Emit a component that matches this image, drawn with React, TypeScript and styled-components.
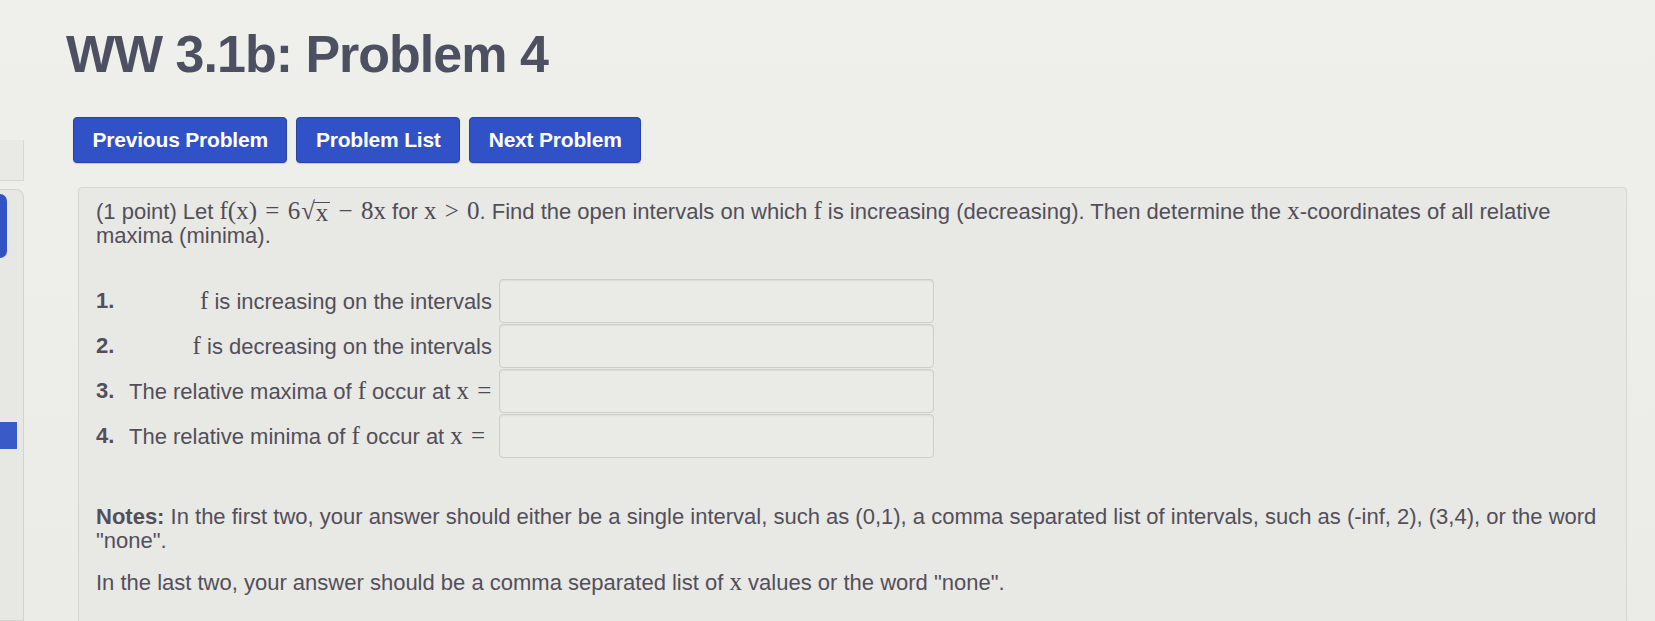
import React from "react";
import styled, { createGlobalStyle } from "styled-components";

const Global = createGlobalStyle`
  html, body { margin: 0; padding: 0; background: #ecebe8; }
  body { font-family: "Liberation Sans", Arial, Helvetica, sans-serif; overflow: hidden; }
  #root { height: 621px; }
`;

const Page = styled.div`
  display: flex;
  height: 621px;
  overflow: hidden;
  background: linear-gradient(180deg, #efefec 0%, #ebebe7 100%);
`;

const Rail = styled.aside`
  width: 24px;
  flex: none;
  display: flex;
  flex-direction: column;
`;

const RailTop = styled.div`
  margin-top: 140px;
  height: 40px;
  background: #e9e9e6;
  border-right: 1px solid #d8d7d2;
  border-bottom: 1px solid #d8d7d2;
`;

const RailPanel = styled.div`
  margin-top: 8px;
  flex: 1;
  display: flex;
  flex-direction: column;
  background: #e7e7e3;
  border: 1px solid #d4d3ce;
  border-left: none;
  border-top-right-radius: 8px;
`;

const RailPill = styled.div`
  margin-top: 4px;
  width: 7px;
  height: 64px;
  background: #3352c4;
  border-radius: 0 7px 7px 0;
`;

const RailSquare = styled.div`
  margin-top: 164px;
  width: 17px;
  height: 27px;
  background: #3a5ac8;
`;

const Main = styled.main`
  flex: 1;
  min-width: 0;
  display: flex;
  flex-direction: column;
  padding: 0 28px 0 49px;
`;

const Title = styled.h1`
  margin: 26px 0 0 -7px;
  font-size: 52px;
  line-height: 57px;
  font-weight: bold;
  letter-spacing: -1px;
  color: #4d5060;
`;

const ButtonRow = styled.nav`
  display: flex;
  gap: 9px;
  margin-top: 34px;
`;

const NavButton = styled.button`
  height: 46px;
  padding: 0 18.5px;
  font-family: "Liberation Sans", Arial, sans-serif;
  font-size: 21px;
  font-weight: bold;
  color: #ffffff;
  background: #3151c7;
  border: 1px solid #2842a6;
  border-radius: 4px;
  box-shadow: 0 1px 1px rgba(0, 0, 0, 0.15);
  letter-spacing: -0.2px;
`;

const ProblemBox = styled.section`
  flex: 1;
  margin-top: 24px;
  margin-left: 5px;
  padding: 11px 17px 40px 17px;
  background: #e8e8e4;
  border: 1px solid #d7d6d1;
  border-radius: 4px;
  font-size: 22px;
  line-height: 24px;
  color: #524f5a;
`;

const Para = styled.p<{ $mt?: number }>`
  margin: ${(p) => p.$mt ?? 0}px 0 0 0;
`;

const MathText = styled.span`
  font-family: "Liberation Serif", "DejaVu Serif", "Times New Roman", serif;
  font-size: 25px;
  line-height: 24px;
  color: #4e4b57;
`;

const Op = styled.span`
  margin: 0 0.33em;
`;

const Radical = styled.span`
  display: inline-flex;
  align-items: flex-end;
  margin-left: 1px;
`;

const Radicand = styled.span`
  border-top: 1.5px solid currentColor;
  line-height: 20px;
  padding: 0 2px;
  margin-left: -1px;
`;

const AnswerList = styled.ol`
  list-style: none;
  margin: 31px 0 0 0;
  padding: 0;
  display: grid;
  row-gap: 1px;
`;

const Row = styled.li`
  display: grid;
  grid-template-columns: 26px 363px 435px;
  column-gap: 7px;
  align-items: center;
  height: 44px;
`;

const Num = styled.span`
  font-weight: bold;
`;

const Label = styled.span`
  text-align: right;
  white-space: nowrap;
`;

const AnswerInput = styled.input`
  box-sizing: border-box;
  height: 44px;
  width: 435px;
  border: 1px solid #cfcec9;
  border-radius: 4px;
  background: #eaeae6;
  box-shadow: inset 0 1px 2px rgba(0, 0, 0, 0.06);
  outline: none;
`;

const Strong = styled.b`
  font-weight: bold;
`;

const M = ({ children }: { children: React.ReactNode }) => <MathText>{children}</MathText>;

const rows: { label: React.ReactNode }[] = [
  { label: <><M>f</M> is increasing on the intervals</> },
  { label: <><M>f</M> is decreasing on the intervals</> },
  { label: <>The relative maxima of <M>f</M> occur at <M>x<Op>=</Op></M></> },
  { label: <>The relative minima of <M>f</M> occur at <M>x<Op>=</Op></M></> },
];

export default function App() {
  return (
    <>
      <Global />
      <Page>
        <Rail>
          <RailTop />
          <RailPanel>
            <RailPill />
            <RailSquare />
          </RailPanel>
        </Rail>
        <Main>
          <Title>WW 3.1b: Problem 4</Title>
          <ButtonRow>
            <NavButton>Previous Problem</NavButton>
            <NavButton>Problem List</NavButton>
            <NavButton>Next Problem</NavButton>
          </ButtonRow>
          <ProblemBox>
            <Para>
              (1 point) Let{" "}
              <M>
                f(x)<Op>=</Op>6
                <Radical>
                  √<Radicand>x</Radicand>
                </Radical>
                <Op>−</Op>8x
              </M>{" "}
              for{" "}
              <M>
                x<Op>&gt;</Op>0
              </M>
              . Find the open intervals on which <M>f</M> is increasing (decreasing). Then determine the <M>x</M>
              -coordinates of all relative maxima (minima).
            </Para>
            <AnswerList>
              {rows.map((r, i) => (
                <Row key={i}>
                  <Num>{i + 1}.</Num>
                  <Label>{r.label}</Label>
                  <AnswerInput type="text" aria-label={`answer ${i + 1}`} />
                </Row>
              ))}
            </AnswerList>
            <Para $mt={47}>
              <Strong>Notes:</Strong> In the first two, your answer should either be a single interval, such as
              (0,1), a comma separated list of intervals, such as (-inf, 2), (3,4), or the word "none".
            </Para>
            <Para $mt={17}>
              In the last two, your answer should be a comma separated list of <M>x</M> values or the word "none".
            </Para>
          </ProblemBox>
        </Main>
      </Page>
    </>
  );
}
